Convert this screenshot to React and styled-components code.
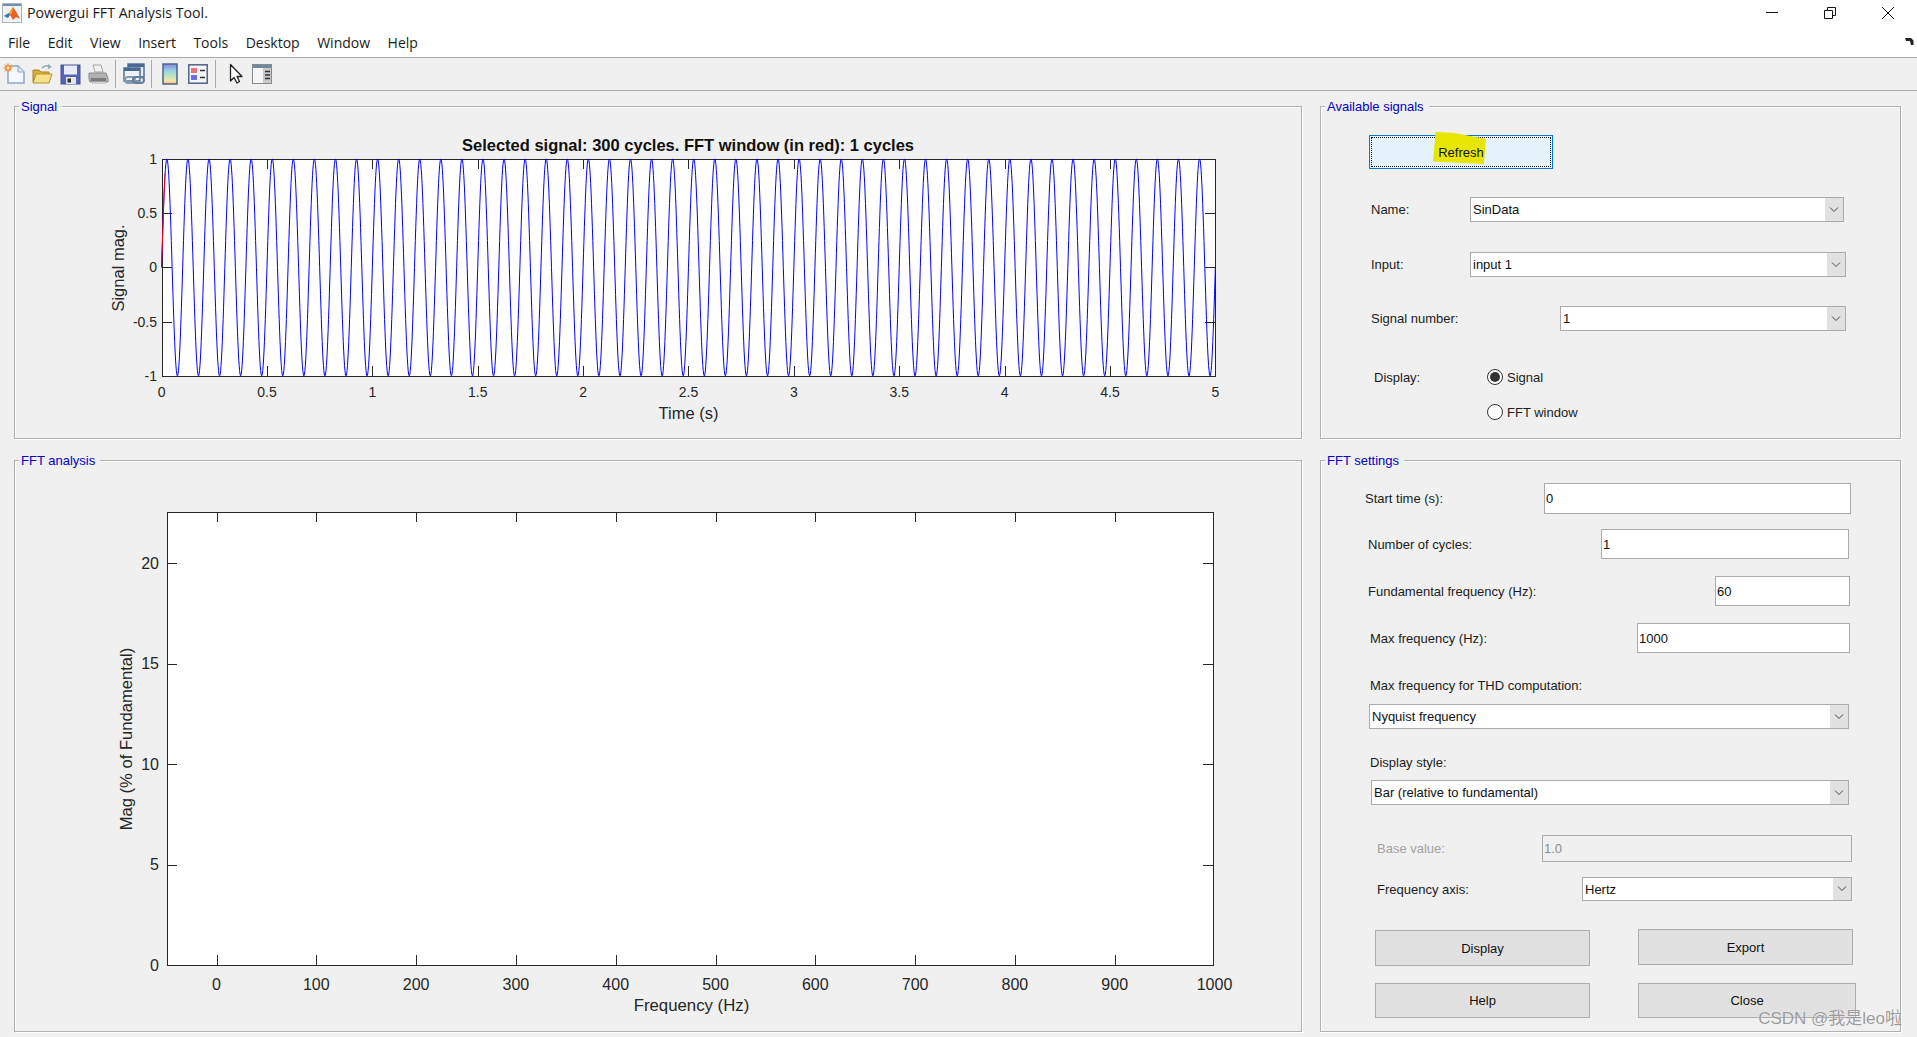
import React from "react";
import styled, { createGlobalStyle } from "styled-components";

const GlobalStyle = createGlobalStyle`
  html, body {
    margin: 0;
    padding: 0;
    height: 100%;
    overflow: hidden;
    background: #f0f0f0;
  }
`;

const Window = styled.div`
  width: 1917px;
  height: 1037px;
  display: flex;
  flex-direction: column;
  background: #f0f0f0;
  font-family: "Liberation Sans", Arial, sans-serif;
  font-size: 13px;
  color: #111;
`;

const TitleBar = styled.div`
  height: 30px;
  box-sizing: border-box;
  padding: 0 23px 5px 2px;
  display: flex;
  align-items: center;
  background: #fff;
`;

const TitleText = styled.span`
  margin-left: 5px;
  font-family: "Open Sans", sans-serif;
  font-size: 14.2px;
  color: #1a1a1a;
`;

const WindowControls = styled.div`
  margin-left: auto;
  display: flex;
  align-items: center;
  gap: 46px;
`;

const MenuBar = styled.div`
  height: 28px;
  box-sizing: border-box;
  padding: 0 3px 3px 8px;
  display: flex;
  align-items: center;
  gap: 17.5px;
  background: #fff;
  border-bottom: 1px solid #a6a6a6;
`;

const MenuItem = styled.span`
  font-family: "Open Sans", sans-serif;
  font-size: 14px;
  color: #1a1a1a;
`;

const DockArrow = styled.svg`
  margin-left: auto;
  margin-top: -2px;
`;

const ToolBar = styled.div`
  height: 33px;
  box-sizing: border-box;
  padding-bottom: 1px;
  display: flex;
  align-items: center;
  background: #f0f0f0;
  border-bottom: 1px solid #a6a6a6;
`;

const ToolButton = styled.div`
  width: 28px;
  height: 31px;
  display: flex;
  align-items: center;
  justify-content: center;
`;

const ToolSeparator = styled.div`
  width: 1px;
  height: 28px;
  margin: 0 4px 0 3px;
  background: #a8a8a8;
`;

const Body = styled.div`
  flex: 1;
  box-sizing: border-box;
  padding: 15px 0 0 14px;
  display: grid;
  grid-template-columns: 1288px 581px;
  grid-template-rows: 333px 572px;
  column-gap: 18px;
  row-gap: 21px;
`;

const Panel = styled.section`
  position: relative;
  box-sizing: border-box;
  border: 1px solid #b0b0b0;
  box-shadow: 1px 1px 0 #fff, inset 1px 1px 0 #fff;
`;

const Legend = styled.span`
  position: absolute;
  top: -8px;
  left: 4px;
  padding: 0 5px 0 2px;
  line-height: 16px;
  font-size: 13px;
  color: #0000c4;
  background: #f0f0f0;
`;

const ChartSvg = styled.svg`
  display: block;
  font-family: "Liberation Sans", Arial, sans-serif;
`;

const Row = styled.div`
  display: flex;
  align-items: center;
  height: ${(p) => p.$h}px;
  margin-top: ${(p) => p.$top}px;
  padding-left: ${(p) => p.$left}px;
`;

const Label = styled.span`
  width: ${(p) => (p.$w ? `${p.$w}px` : "auto")};
  flex: none;
  white-space: nowrap;
  color: ${(p) => (p.$disabled ? "#a3a3a3" : "#1c1c1c")};
`;

const TextField = styled.div`
  width: ${(p) => p.$w}px;
  height: 100%;
  box-sizing: border-box;
  display: flex;
  align-items: center;
  padding-left: 1px;
  border: 1px solid #ababab;
  background: ${(p) => (p.$disabled ? "#f0f0f0" : "#fff")};
  color: ${(p) => (p.$disabled ? "#8c8c8c" : "#111")};
`;

const SelectBox = styled(TextField)`
  justify-content: space-between;
  padding-left: 2px;
`;

const SelectArrow = styled.div`
  width: 18px;
  height: 100%;
  display: flex;
  align-items: center;
  justify-content: center;
  background: #e1e1e1;
`;

const Radio = styled.span`
  width: 16px;
  height: 16px;
  box-sizing: border-box;
  flex: none;
  display: flex;
  align-items: center;
  justify-content: center;
  margin-right: 4px;
  border-radius: 50%;
  border: 1px solid #333;
  background: #fff;

  &::after {
    content: "";
    display: ${(p) => (p.$checked ? "block" : "none")};
    width: 10px;
    height: 10px;
    border-radius: 50%;
    background: #333;
  }
`;

const RefreshButton = styled.div`
  position: relative;
  width: 184px;
  height: 34px;
  box-sizing: border-box;
  display: flex;
  align-items: center;
  justify-content: center;
  border: 1px solid #0078d7;
  background: #e5f1fb;
  color: #111;

  &::before {
    content: "";
    position: absolute;
    inset: 1px;
    border: 1px dotted #111;
  }
`;

const Highlighter = styled.span`
  position: absolute;
  left: 63px;
  top: -4px;
  width: 53px;
  height: 32px;
  background: #e6e600;
  clip-path: polygon(5% 0, 40% 3%, 100% 22%, 96% 100%, 0 92%);
`;

const RefreshLabel = styled.span`
  position: relative;
`;

const ActionRow = styled.div`
  display: flex;
  align-items: flex-start;
  gap: 48px;
  margin-top: ${(p) => p.$top}px;
  padding-left: 54px;
`;

const ActionButton = styled.div`
  width: ${(p) => p.$w}px;
  height: ${(p) => p.$h}px;
  margin-top: ${(p) => p.$shift || 0}px;
  box-sizing: border-box;
  display: flex;
  align-items: center;
  justify-content: center;
  border: 1px solid #adadad;
  background: #e1e1e1;
  color: #111;
`;

const Watermark = styled.span`
  position: absolute;
  right: -2px;
  bottom: 1px;
  font-family: "Liberation Sans", "Noto Sans CJK SC", sans-serif;
  font-size: 17px;
  line-height: 22px;
  color: rgba(130, 130, 130, 0.8);
  text-shadow: 0 0 1px #fff;
  white-space: nowrap;
`;

/* ---- toolbar and window icons ---- */

const MatlabIcon = () => (
  <svg width="20" height="20" viewBox="0 0 20 20">
    <rect x="0.5" y="0.5" width="19" height="19" fill="#f2f2f2" stroke="#a9b4bf" />
    <rect x="1" y="1" width="18" height="2" fill="#6d8fb3" />
    <path d="M2 13 L7 10 L11 4 L15 10 L18 16 L14 14 L11 17 L8 12 Z" fill="#e8622a" />
    <path d="M2 13 L7 10 L8 12 L6 15 Z" fill="#2f78c0" />
    <path d="M7 10 L11 4 L10 10 L8 12 Z" fill="#f2a93b" />
  </svg>
);

const NewIcon = () => (
  <svg width="24" height="24" viewBox="0 0 24 24">
    <path d="M6 4 H16 L22 10 V21 H6 Z" fill="#f6fafe" stroke="#8aa6c6" strokeWidth="1.5" />
    <path d="M16 4 V10 H22" fill="#dbe7f3" stroke="#8aa6c6" />
    <circle cx="6" cy="6" r="3.4" fill="#ef9c4a" />
    <path d="M6 1 V11 M1 6 H11 M2.5 2.5 L9.5 9.5 M9.5 2.5 L2.5 9.5" stroke="#ef9c4a" strokeWidth="0.8" />
    <circle cx="6" cy="6" r="1.3" fill="#fbe6c8" />
  </svg>
);

const OpenIcon = () => (
  <svg width="24" height="24" viewBox="0 0 24 24">
    <path d="M3 8 H9 L11 10 H19 V20 H3 Z" fill="#d9ad3f" stroke="#a98324" />
    <path d="M3 21 L6 12 H22 L19 21 Z" fill="#f6e08a" stroke="#b8922c" />
    <path d="M12 6 Q16 2 20 5" fill="none" stroke="#8fa9b8" strokeWidth="1.6" />
    <path d="M18 2 L22 5 L18 7 Z" fill="#8fa9b8" />
  </svg>
);

const SaveIcon = () => (
  <svg width="24" height="24" viewBox="0 0 24 24">
    <rect x="3" y="3" width="19" height="19" fill="#5662b4" stroke="#46519a" />
    <rect x="6" y="3.5" width="13" height="9" fill="#e9ecf7" />
    <rect x="8" y="15" width="10" height="7" fill="#e4e6ee" />
    <rect x="9.5" y="16.5" width="3.5" height="4" fill="#333" />
  </svg>
);

const PrintIcon = () => (
  <svg width="24" height="24" viewBox="0 0 24 24">
    <path d="M7 3 H15 L17 10 H9 Z" fill="#f0f0f0" stroke="#a5a5a5" />
    <path d="M3 11 H20 L22 16 V20 H4 L3 17 Z" fill="#b2b2b2" stroke="#8a8a8a" />
    <rect x="5" y="16" width="15" height="3" fill="#7d7d7d" />
    <rect x="6" y="20" width="14" height="2" fill="#cfcfcf" />
  </svg>
);

const LinkIcon = () => (
  <svg width="24" height="24" viewBox="0 0 24 24">
    <rect x="6" y="2" width="16" height="13" fill="#e6ecf3" stroke="#4a6890" strokeWidth="1.4" />
    <rect x="6" y="2" width="16" height="3" fill="#4a6890" />
    <rect x="2" y="6" width="16" height="13" fill="#eef2f7" stroke="#4a6890" strokeWidth="1.4" />
    <rect x="2" y="6" width="16" height="3" fill="#4a6890" />
    <rect x="3" y="15" width="10" height="6" rx="3" fill="none" stroke="#8b9cb2" strokeWidth="2" />
    <rect x="11" y="15" width="11" height="6" rx="3" fill="none" stroke="#677c9a" strokeWidth="2" />
  </svg>
);

const ColorbarIcon = () => (
  <svg width="16" height="22" viewBox="0 0 16 22">
    <defs>
      <linearGradient id="cbar" x1="0" y1="0" x2="0" y2="1">
        <stop offset="0" stopColor="#7f8ce0" />
        <stop offset="0.35" stopColor="#9ad4e6" />
        <stop offset="0.65" stopColor="#c6e6b2" />
        <stop offset="0.85" stopColor="#f5e3a2" />
        <stop offset="1" stopColor="#f0b48c" />
      </linearGradient>
    </defs>
    <rect x="1" y="1" width="14" height="20" fill="url(#cbar)" stroke="#4d6488" strokeWidth="1.5" />
  </svg>
);

const LegendIcon = () => (
  <svg width="20" height="20" viewBox="0 0 20 20">
    <rect x="0.8" y="0.8" width="18.4" height="18.4" fill="#f4f6f9" stroke="#4d6488" strokeWidth="1.5" />
    <rect x="3" y="4" width="6" height="5" fill="#ee7070" />
    <rect x="3" y="11" width="6" height="5" fill="#6e6ee8" />
    <path d="M12 6.5 H17 M12 13.5 H17" stroke="#333" strokeWidth="1.4" />
  </svg>
);

const CursorIcon = () => (
  <svg width="24" height="24" viewBox="-2 0 24 24">
    <path
      d="M6.5 2.5 V19 L10 15.5 L13 21 L15.5 19.5 L13 14.5 H18 Z"
      fill="#fff"
      stroke="#222"
      strokeWidth="1.3"
      strokeLinejoin="round"
    />
  </svg>
);

const PlotPanelIcon = () => (
  <svg width="20" height="20" viewBox="0 0 20 20">
    <rect x="0.5" y="0.5" width="19" height="19" fill="#c9c9c9" stroke="#8a8a8a" />
    <rect x="1" y="1" width="18" height="3" fill="#6e8aa3" />
    <rect x="1" y="4" width="10" height="15" fill="#f7f7f7" />
    <path d="M13 7.5 H18 M13 11 H18 M13 14.5 H18" stroke="#333" strokeWidth="1.4" />
  </svg>
);

const Chevron = () => (
  <svg width="10" height="6" viewBox="0 0 10 6">
    <path d="M1 0.5 L5 4.5 L9 0.5" fill="none" stroke="#444" strokeWidth="1" />
  </svg>
);

const Select = ({ w, children }) => (
  <SelectBox $w={w}>
    {children}
    <SelectArrow>
      <Chevron />
    </SelectArrow>
  </SelectBox>
);

/* ---- plots, drawn in page coordinates through the viewBox ---- */

const INK = "#262626";

function Axes({ left, top, right, bottom, xTicks, yTicks, tickSize, xLabelY, yLabelX, tickLen = 10 }) {
  return (
    <g>
      <rect
        x={left + 0.5}
        y={top + 0.5}
        width={right - left}
        height={bottom - top}
        fill="#fff"
        stroke={INK}
        strokeWidth="1"
      />
      {xTicks.map(([x, label]) => {
        // the last tick can land a pixel past the box, keep it on the frame
        const px = Math.min(Math.round(x), right) + 0.5;
        return (
          <g key={label}>
            <path d={`M${px} ${top} v${tickLen} M${px} ${bottom} v-${tickLen}`} stroke={INK} />
            <text x={x} y={xLabelY} fontSize={tickSize} fill={INK} textAnchor="middle">
              {label}
            </text>
          </g>
        );
      })}
      {yTicks.map(([y, label]) => {
        const py = Math.round(y) + 0.5;
        return (
          <g key={label}>
            <path d={`M${left} ${py} h${tickLen} M${right} ${py} h-${tickLen}`} stroke={INK} />
            <text x={yLabelX} y={y + tickSize * 0.36} fontSize={tickSize} fill={INK} textAnchor="end">
              {label}
            </text>
          </g>
        );
      })}
    </g>
  );
}

function SignalPlot() {
  const x0 = 161.6;
  const sx = 210.75;
  const yMid = 267.4;
  const sy = 108.5;
  const point = (t) => `${(x0 + t * sx).toFixed(2)},${(yMid - Math.sin(2 * Math.PI * 10 * t) * sy).toFixed(2)}`;
  const blue = [];
  for (let i = 0; i <= 2500; i++) blue.push(point(i * 0.002));
  const red = [];
  for (let i = 0; i <= 20; i++) red.push(point((i / 20) * (1 / 60)));

  const xTicks = [];
  for (let i = 0; i <= 10; i++) xTicks.push([x0 + (i / 2) * sx, String(i / 2)]);
  const yTicks = [1, 0.5, 0, -0.5, -1].map((v) => [yMid - v * sy, String(v)]);

  return (
    <ChartSvg width="1286" height="331" viewBox="15 107 1286 331">
      <Axes left={162} top={159} right={1215} bottom={376} xTicks={xTicks} yTicks={yTicks} tickSize={14} xLabelY={397} yLabelX={157} />
      <polyline points={blue.join(" ")} fill="none" stroke="#0000ff" strokeWidth="1" />
      <polyline points={red.join(" ")} fill="none" stroke="#ff0000" strokeWidth="1" />
      <text x="688" y="151" fontSize="16.5" fontWeight="bold" fill="#111" textAnchor="middle">
        Selected signal: 300 cycles. FFT window (in red): 1 cycles
      </text>
      <text x="688.5" y="419" fontSize="16.5" fill={INK} textAnchor="middle">
        Time (s)
      </text>
      <text x="0" y="0" fontSize="16.5" fill={INK} textAnchor="middle" transform="translate(124 268) rotate(-90)">
        Signal mag.
      </text>
    </ChartSvg>
  );
}

function FftPlot() {
  const xTicks = [];
  for (let i = 0; i <= 10; i++) xTicks.push([216.5 + i * 99.8, String(i * 100)]);
  const yTicks = [0, 5, 10, 15, 20].map((v) => [965 - v * 20.1, String(v)]);

  return (
    <ChartSvg width="1286" height="570" viewBox="15 461 1286 570">
      <Axes left={167} top={512} right={1213} bottom={965} xTicks={xTicks} yTicks={yTicks} tickSize={16} xLabelY={990} yLabelX={159} />
      <text x="691.5" y="1011" fontSize="16.8" fill={INK} textAnchor="middle">
        Frequency (Hz)
      </text>
      <text x="0" y="0" fontSize="16.6" fill={INK} textAnchor="middle" transform="translate(132 739) rotate(-90)">
        Mag (% of Fundamental)
      </text>
    </ChartSvg>
  );
}

const MENU = ["File", "Edit", "View", "Insert", "Tools", "Desktop", "Window", "Help"];

export default function App() {
  return (
    <Window>
      <GlobalStyle />
      <TitleBar>
        <MatlabIcon />
        <TitleText>Powergui FFT Analysis Tool.</TitleText>
        <WindowControls>
          <svg width="12" height="12" viewBox="0 0 12 12">
            <path d="M0 5.5 H12" stroke="#111" />
          </svg>
          <svg width="12" height="12" viewBox="0 0 12 12">
            <path d="M0.5 3.5 H8.5 V11.5 H0.5 Z M3.5 3.5 V0.5 H11.5 V8.5 H8.5" fill="none" stroke="#111" />
          </svg>
          <svg width="12" height="12" viewBox="0 0 12 12">
            <path d="M0 0 L12 12 M12 0 L0 12" stroke="#111" />
          </svg>
        </WindowControls>
      </TitleBar>
      <MenuBar>
        {MENU.map((m) => (
          <MenuItem key={m}>{m}</MenuItem>
        ))}
        <DockArrow width="9" height="8" viewBox="0 0 9 8">
          <path d="M0 1 H6 L8.5 3.5 V8 H6 L5 4 H1 Z" fill="#222" />
        </DockArrow>
      </MenuBar>
      <ToolBar>
        <ToolButton><NewIcon /></ToolButton>
        <ToolButton><OpenIcon /></ToolButton>
        <ToolButton><SaveIcon /></ToolButton>
        <ToolButton><PrintIcon /></ToolButton>
        <ToolSeparator />
        <ToolButton><LinkIcon /></ToolButton>
        <ToolSeparator />
        <ToolButton><ColorbarIcon /></ToolButton>
        <ToolButton><LegendIcon /></ToolButton>
        <ToolSeparator />
        <ToolButton><CursorIcon /></ToolButton>
        <ToolButton><PlotPanelIcon /></ToolButton>
      </ToolBar>
      <Body>
        <Panel>
          <Legend>Signal</Legend>
          <SignalPlot />
        </Panel>
        <Panel>
          <Legend>Available signals</Legend>
          <Row $h={34} $top={28} $left={48}>
            <RefreshButton>
              <Highlighter />
              <RefreshLabel>Refresh</RefreshLabel>
            </RefreshButton>
          </Row>
          <Row $h={25} $top={28} $left={50}>
            <Label $w={99}>Name:</Label>
            <Select w={374}>SinData</Select>
          </Row>
          <Row $h={25} $top={30} $left={50}>
            <Label $w={99}>Input:</Label>
            <Select w={376}>input 1</Select>
          </Row>
          <Row $h={25} $top={29} $left={50}>
            <Label $w={189}>Signal number:</Label>
            <Select w={286}>1</Select>
          </Row>
          <Row $h={16} $top={38} $left={53}>
            <Label $w={113}>Display:</Label>
            <Radio $checked />
            <Label>Signal</Label>
          </Row>
          <Row $h={16} $top={19} $left={166}>
            <Radio />
            <Label>FFT window</Label>
          </Row>
        </Panel>
        <Panel>
          <Legend>FFT analysis</Legend>
          <FftPlot />
        </Panel>
        <Panel>
          <Legend>FFT settings</Legend>
          <Row $h={31} $top={22} $left={44}>
            <Label $w={179}>Start time (s):</Label>
            <TextField $w={307}>0</TextField>
          </Row>
          <Row $h={30} $top={15} $left={47}>
            <Label $w={233}>Number of cycles:</Label>
            <TextField $w={248}>1</TextField>
          </Row>
          <Row $h={30} $top={17} $left={47}>
            <Label $w={347}>Fundamental frequency (Hz):</Label>
            <TextField $w={135}>60</TextField>
          </Row>
          <Row $h={30} $top={17} $left={49}>
            <Label $w={267}>Max frequency (Hz):</Label>
            <TextField $w={213}>1000</TextField>
          </Row>
          <Row $h={16} $top={24} $left={49}>
            <Label>Max frequency for THD computation:</Label>
          </Row>
          <Row $h={25} $top={11} $left={48}>
            <Select w={480}>Nyquist frequency</Select>
          </Row>
          <Row $h={16} $top={25} $left={49}>
            <Label>Display style:</Label>
          </Row>
          <Row $h={25} $top={10} $left={50}>
            <Select w={478}>Bar (relative to fundamental)</Select>
          </Row>
          <Row $h={27} $top={30} $left={56}>
            <Label $w={165} $disabled>Base value:</Label>
            <TextField $w={310} $disabled>1.0</TextField>
          </Row>
          <Row $h={24} $top={15} $left={56}>
            <Label $w={205}>Frequency axis:</Label>
            <Select w={270}>Hertz</Select>
          </Row>
          <ActionRow $top={29}>
            <ActionButton $w={215} $h={36}>Display</ActionButton>
            <ActionButton $w={215} $h={36} $shift={-1}>Export</ActionButton>
          </ActionRow>
          <ActionRow $top={17}>
            <ActionButton $w={215} $h={35}>Help</ActionButton>
            <ActionButton $w={218} $h={35}>Close</ActionButton>
          </ActionRow>
          <Watermark>CSDN @我是leo啦</Watermark>
        </Panel>
      </Body>
    </Window>
  );
}
